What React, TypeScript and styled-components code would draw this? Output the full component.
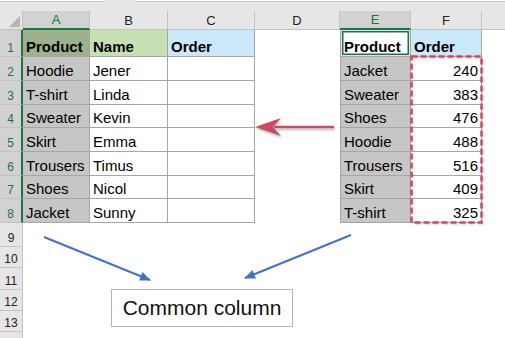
import React from "react";
import styled, { createGlobalStyle } from "styled-components";

const GREEN = "#217346";
const GRID = "#a6a6a6";
const HEAD_LINE = "#c3c3c3";
const RED = "#c94d62";
const BLUE = "#4472c4";

const leftRows = [
  ["Hoodie", "Jener"],
  ["T-shirt", "Linda"],
  ["Sweater", "Kevin"],
  ["Skirt", "Emma"],
  ["Trousers", "Timus"],
  ["Shoes", "Nicol"],
  ["Jacket", "Sunny"],
];

const rightRows: [string, number][] = [
  ["Jacket", 240],
  ["Sweater", 383],
  ["Shoes", 476],
  ["Hoodie", 488],
  ["Trousers", 516],
  ["Skirt", 409],
  ["T-shirt", 325],
];

const letters = ["A", "B", "C", "D", "E", "F", ""];
const selectedCols = ["A", "E"];

const GlobalStyle = createGlobalStyle`
  html, body { margin: 0; padding: 0; background: #fff; }
  body { font-family: "Liberation Sans", Arial, sans-serif; }
`;

const Sheet = styled.div`
  position: relative;
  width: 505px;
  height: 338px;
  overflow: hidden;
  background: #fff;
`;

const FormulaStrip = styled.div`
  height: 11px;
  display: flex;
  gap: 30px;
  align-items: flex-start;
  background: #e6e6e6;
`;

const FieldEdge = styled.div<{ $width?: number }>`
  flex: ${(p) => (p.$width ? `0 0 ${p.$width}px` : "1")};
  height: 1px;
  background: #fff;
  border-bottom: 1px solid #c8c8c8;
`;

const Grid = styled.div`
  display: grid;
  grid-template-columns: 23px 67px 78px 87px 85px 71px 71px 60px;
  grid-template-rows: 19px 27px 24px 24px 23px 24px 24px 23px 24px 24px 21px 22px 21px 21px 21px;
`;

const Corner = styled.div`
  grid-row: 1;
  grid-column: 1;
  position: relative;
  background: #e6e6e6;
  border-right: 1px solid ${HEAD_LINE};
  border-bottom: 1px solid ${HEAD_LINE};
  &::after {
    content: "";
    position: absolute;
    right: 2px;
    bottom: 2px;
    width: 0;
    height: 0;
    border-left: 11px solid transparent;
    border-bottom: 11px solid #b5b5b5;
  }
`;

const ColHead = styled.div<{ $c: number; $sel?: boolean }>`
  grid-row: 1;
  grid-column: ${(p) => p.$c};
  box-sizing: border-box;
  display: flex;
  align-items: center;
  justify-content: center;
  font-size: 13px;
  background: ${(p) => (p.$sel ? "#d2d2d2" : "#e6e6e6")};
  color: ${(p) => (p.$sel ? GREEN : "#222")};
  border-right: 1px solid ${HEAD_LINE};
  border-bottom: ${(p) => (p.$sel ? `2px solid ${GREEN}` : `1px solid ${HEAD_LINE}`)};
`;

const RowHead = styled.div<{ $r: number; $sel?: boolean }>`
  grid-row: ${(p) => p.$r};
  grid-column: 1;
  box-sizing: border-box;
  display: flex;
  align-items: flex-end;
  justify-content: center;
  padding-bottom: 1px;
  font-size: 12px;
  line-height: 14px;
  background: ${(p) => (p.$sel ? "#d2d2d2" : "#e6e6e6")};
  color: ${(p) => (p.$sel ? GREEN : "#222")};
  border-right: ${(p) => (p.$sel ? `2px solid ${GREEN}` : `1px solid ${HEAD_LINE}`)};
  border-bottom: 1px solid ${HEAD_LINE};
`;

const Cell = styled.div<{
  $r: number;
  $c: number;
  $bg?: string;
  $bold?: boolean;
  $num?: boolean;
  $line?: boolean;
  $lead?: boolean;
  $active?: boolean;
}>`
  grid-row: ${(p) => p.$r};
  grid-column: ${(p) => p.$c};
  box-sizing: border-box;
  display: flex;
  align-items: flex-end;
  justify-content: ${(p) => (p.$num ? "flex-end" : "flex-start")};
  padding: 0 3px 1px 3px;
  font-size: 15px;
  line-height: 17px;
  white-space: nowrap;
  overflow: hidden;
  color: #000;
  font-weight: ${(p) => (p.$bold ? 700 : 400)};
  background: ${(p) => (p.$active ? "#fff" : p.$bg || "#fff")};
  border-right: ${(p) => (p.$line ? `1px solid ${GRID}` : "none")};
  border-bottom: ${(p) => (p.$line ? `1px solid ${GRID}` : "none")};
  border-left: ${(p) => (p.$lead ? `1px solid ${GRID}` : "none")};
  box-shadow: ${(p) =>
    p.$active ? `inset 0 0 0 1px ${p.$bg}, inset 0 0 0 2.5px ${GREEN}` : "none"};
`;

const Marquee = styled.div`
  grid-row: 3 / 10;
  grid-column: 7;
  position: relative;
  z-index: 2;
  pointer-events: none;
  svg {
    position: absolute;
    left: 0;
    top: 0;
    overflow: visible;
    filter: drop-shadow(1px 1px 1px rgba(0, 0, 0, 0.18));
  }
`;

const Overlay = styled.svg`
  position: absolute;
  left: 0;
  top: 0;
  pointer-events: none;
  z-index: 3;
`;

const Callout = styled.div`
  position: absolute;
  left: 111px;
  top: 289px;
  width: 182px;
  height: 38px;
  box-sizing: border-box;
  border: 1px solid #b4b4b4;
  background: #fff;
  display: flex;
  align-items: center;
  justify-content: center;
  font-size: 21px;
  color: #111;
  z-index: 3;
`;

export default function App() {
  const rows = Array.from({ length: 14 }, (_, i) => i + 1);

  return (
    <Sheet>
      <GlobalStyle />
      <FormulaStrip>
        <FieldEdge $width={105} />
        <FieldEdge />
      </FormulaStrip>

      <Grid>
        <Corner />
        {letters.map((l, i) => (
          <ColHead key={"h" + i} $c={i + 2} $sel={selectedCols.includes(l)}>
            {l}
          </ColHead>
        ))}

        {rows.map((n) => (
          <RowHead key={"r" + n} $r={n + 1} $sel={n <= 8}>
            {n}
          </RowHead>
        ))}

        {/* header row of both tables */}
        <Cell $r={2} $c={2} $bg="#9db28c" $bold $line>Product</Cell>
        <Cell $r={2} $c={3} $bg="#c6e0b4" $bold $line>Name</Cell>
        <Cell $r={2} $c={4} $bg="#cbe8fa" $bold $line>Order</Cell>
        <Cell $r={2} $c={6} $bg="#cbe8fa" $bold $line $lead $active>Product</Cell>
        <Cell $r={2} $c={7} $bg="#cbe8fa" $bold $line>Order</Cell>

        {leftRows.map(([product, name], i) => (
          <React.Fragment key={"l" + i}>
            <Cell $r={i + 3} $c={2} $bg="#c6c6c6" $line>{product}</Cell>
            <Cell $r={i + 3} $c={3} $line>{name}</Cell>
            <Cell $r={i + 3} $c={4} $line />
          </React.Fragment>
        ))}

        {rightRows.map(([product, order], i) => (
          <React.Fragment key={"rt" + i}>
            <Cell $r={i + 3} $c={6} $bg="#c6c6c6" $line $lead>{product}</Cell>
            <Cell $r={i + 3} $c={7} $num $line>{order}</Cell>
          </React.Fragment>
        ))}

        <Marquee>
          <svg width="71" height="166">
            <rect
              x="0.5"
              y="-0.5"
              width="70"
              height="166"
              fill="none"
              stroke={RED}
              strokeWidth="2.5"
              strokeDasharray="6 3"
            />
          </svg>
        </Marquee>
      </Grid>

      <Overlay width="505" height="338" viewBox="0 0 505 338">
        <defs>
          <marker
            id="blueHead"
            markerUnits="userSpaceOnUse"
            markerWidth="12"
            markerHeight="10"
            refX="10"
            refY="5"
            orient="auto"
          >
            <path d="M0,0.5 L11,5 L0,9.5 Z" fill={BLUE} />
          </marker>
          <filter id="soft" x="-10%" y="-30%" width="130%" height="180%">
            <feDropShadow dx="1" dy="2" stdDeviation="1.2" floodColor="#000" floodOpacity="0.25" />
          </filter>
        </defs>

        <g filter="url(#soft)">
          <line x1="334" y1="127" x2="274" y2="127" stroke={RED} strokeWidth="2.5" />
          <path d="M255,127 L281,118 L273,127 L281,136 Z" fill={RED} />
        </g>

        <line x1="44" y1="237" x2="150" y2="280" stroke={BLUE} strokeWidth="2" markerEnd="url(#blueHead)" />
        <line x1="351" y1="235" x2="245" y2="278" stroke={BLUE} strokeWidth="2" markerEnd="url(#blueHead)" />
      </Overlay>

      <Callout>Common column</Callout>
    </Sheet>
  );
}
